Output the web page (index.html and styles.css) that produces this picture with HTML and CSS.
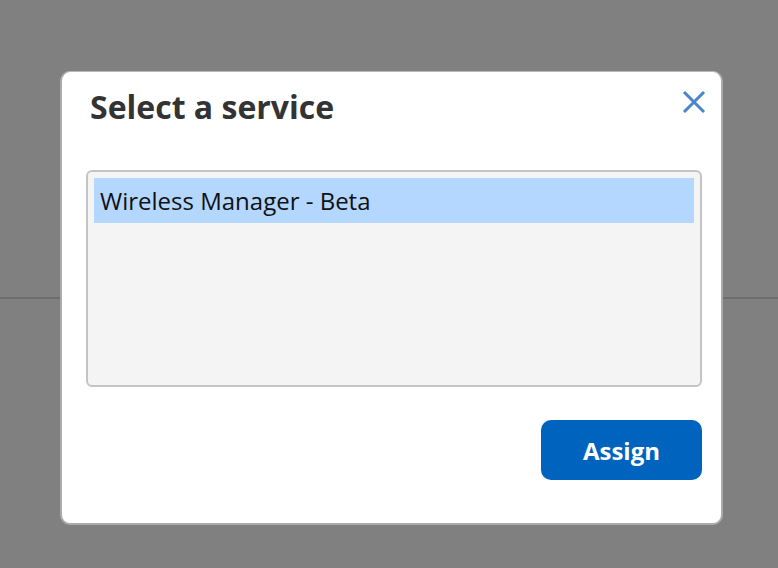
FILE: index.html
```html
<!DOCTYPE html>
<html>
<head>
<meta charset="utf-8">
<link rel="stylesheet" href="styles.css">
</head>
<body>
<div class="page">
  <div class="page-top"></div>
</div>
<div class="modal">
  <div class="modal-head">
    <h2 class="modal-title">Select a service</h2>
    <button class="close" aria-label="Close">
      <svg width="24" height="22" viewBox="0 0 24 22"><path d="M2 1 L22 21 M22 1 L2 21" stroke="#4a87c5" stroke-width="3" fill="none"/></svg>
    </button>
  </div>
  <div class="listbox">
    <div class="option selected">Wireless Manager - Beta</div>
  </div>
  <div class="modal-foot">
    <button class="assign">Assign</button>
  </div>
</div>
</body>
</html>
```
FILE: styles.css
```css
html, body {
  margin: 0;
  padding: 0;
  background: #808080;
  font-family: "Open Sans", "Liberation Sans", sans-serif;
}
.page {
  width: 778px;
  height: 568px;
}
.page-top {
  height: 297px;
  border-bottom: 2px solid #6e6e6e;
}
.modal {
  position: absolute;
  left: 60px;
  top: 71px;
  width: 659px;
  height: 451px;
  background: #fff;
  border: 2px solid #ababab;
  border-top: 1px solid #b8b8b8;
  border-radius: 10px;
  box-sizing: content-box;
  padding: 0;
  display: flex;
  flex-direction: column;
}
.modal-head {
  display: flex;
  justify-content: space-between;
  align-items: flex-start;
  height: 98px;
  padding: 0 15px 0 28px;
}
.modal-title {
  margin: 13px 0 0 0;
  font-size: 32px;
  line-height: 44px;
  font-weight: 700;
  color: #333333;
}
.close {
  margin-top: 19px;
  padding: 0;
  border: 0;
  background: none;
  width: 24px;
  height: 22px;
}
.close svg { display: block; }
.listbox {
  margin: 0 19px 0 24px;
  height: 201px;
  border: 2px solid #c4c4c4;
  border-radius: 6px;
  background: #f4f4f4;
  padding: 6px;
}
.option {
  height: 45px;
  line-height: 45px;
  padding: 0 6px;
  font-size: 24px;
  color: #111;
}
.option.selected {
  background: #b3d7ff;
}
.modal-foot {
  display: flex;
  justify-content: flex-end;
  padding: 33px 19px 0 0;
}
.assign {
  width: 161px;
  height: 60px;
  border: 0;
  border-radius: 10px;
  background: #0064bf;
  color: #fff;
  font-family: "Open Sans", "Liberation Sans", sans-serif;
  font-weight: 700;
  font-size: 24px;
}
```
